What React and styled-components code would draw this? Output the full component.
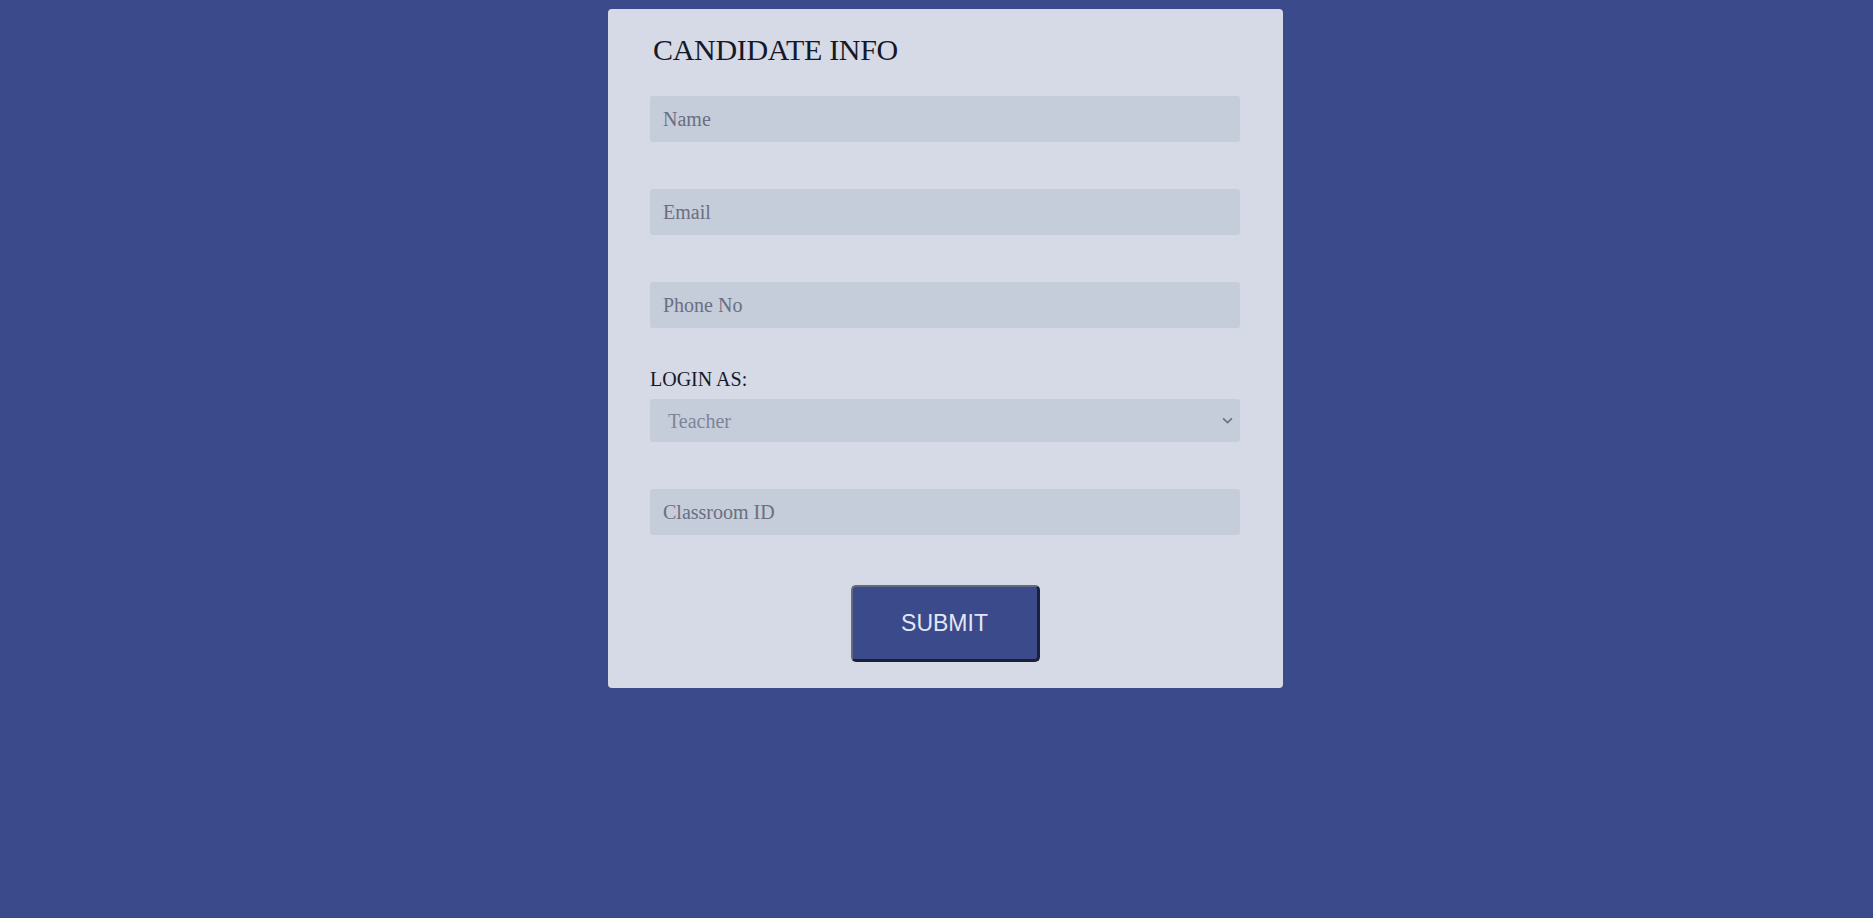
import React, { useState } from 'react';
import styled, { createGlobalStyle } from 'styled-components';

const GlobalStyle = createGlobalStyle`
  html, body {
    margin: 0;
    padding: 0;
    background: #3a4a8a;
  }
  * {
    box-sizing: border-box;
  }
`;

function App() {
    const [role, setRole] = useState('Teacher');

    return (
        <Page>
            <GlobalStyle />
            <Card>
                <Title>CANDIDATE INFO</Title>
                <Form onSubmit={e => e.preventDefault()}>
                    <Field placeholder="Name" />
                    <Field placeholder="Email" />
                    <Field placeholder="Phone No" />
                    <RoleGroup>
                        <Label>LOGIN AS:</Label>
                        <SelectWrap>
                            <Select value={role} onChange={e => setRole(e.target.value)}>
                                <option>Teacher</option>
                                <option>Student</option>
                            </Select>
                            <Chevron viewBox="0 0 10 6">
                                <path d="M1 1 L5 5 L9 1" fill="none" stroke="#6b7185" strokeWidth="1.5" />
                            </Chevron>
                        </SelectWrap>
                    </RoleGroup>
                    <Field placeholder="Classroom ID" />
                    <ButtonRow>
                        <SubmitButton type="submit">SUBMIT</SubmitButton>
                    </ButtonRow>
                </Form>
            </Card>
        </Page>
    );
}

export default App;

const Page = styled.div`
    min-height: 100vh;
    display: flex;
    justify-content: center;
    align-items: flex-start;
    padding: 9px 0 0 18px;
`

const Card = styled.div`
    width: 675px;
    height: 679px;
    background: #d6dae7;
    border-radius: 4px;
    padding: 0 43px 0 42px;
`

const Title = styled.h1`
    margin: 0;
    padding: 23px 0 0 3px;
    font-family: 'Liberation Serif', serif;
    font-weight: 400;
    font-size: 30px;
    line-height: 36px;
    color: #141827;
    letter-spacing: -0.3px;
`

const Form = styled.form`
    display: flex;
    flex-direction: column;
    gap: 47px;
    margin-top: 28px;
`

const Field = styled.input`
    display: block;
    width: 100%;
    height: 46px;
    border: none;
    outline: none;
    border-radius: 3px;
    background: #c5ccda;
    padding: 0 13px;
    font-family: 'Liberation Serif', serif;
    font-size: 20px;
    color: #3a3f52;
    &::placeholder {
        color: #6a6f83;
    }
`

const RoleGroup = styled.div`
    display: flex;
    flex-direction: column;
    margin-top: -7px;
`

const Label = styled.label`
    font-family: 'Liberation Serif', serif;
    font-size: 20px;
    line-height: 22px;
    color: #151927;
    margin-bottom: 9px;
`

const SelectWrap = styled.div`
    position: relative;
`

const Select = styled.select`
    appearance: none;
    width: 100%;
    height: 43px;
    border: none;
    outline: none;
    border-radius: 3px;
    background: #c5ccda;
    padding: 0 18px;
    font-family: 'Liberation Serif', serif;
    font-size: 20px;
    color: #7d8598;
`

const Chevron = styled.svg`
    position: absolute;
    right: 7px;
    top: 18px;
    width: 11px;
    height: 7px;
    pointer-events: none;
`

const ButtonRow = styled.div`
    display: flex;
    justify-content: center;
    margin-top: 3px;
`

const SubmitButton = styled.button`
    width: 189px;
    height: 77px;
    background: #3a4a8a;
    color: #e3e6f3;
    font-family: 'Liberation Sans', Arial, sans-serif;
    font-size: 23px;
    border-radius: 5px;
    border-style: solid;
    border-width: 2px 3px 3px 2px;
    border-color: #646a80 #1c2139 #1c2139 #646a80;
    cursor: pointer;
`
